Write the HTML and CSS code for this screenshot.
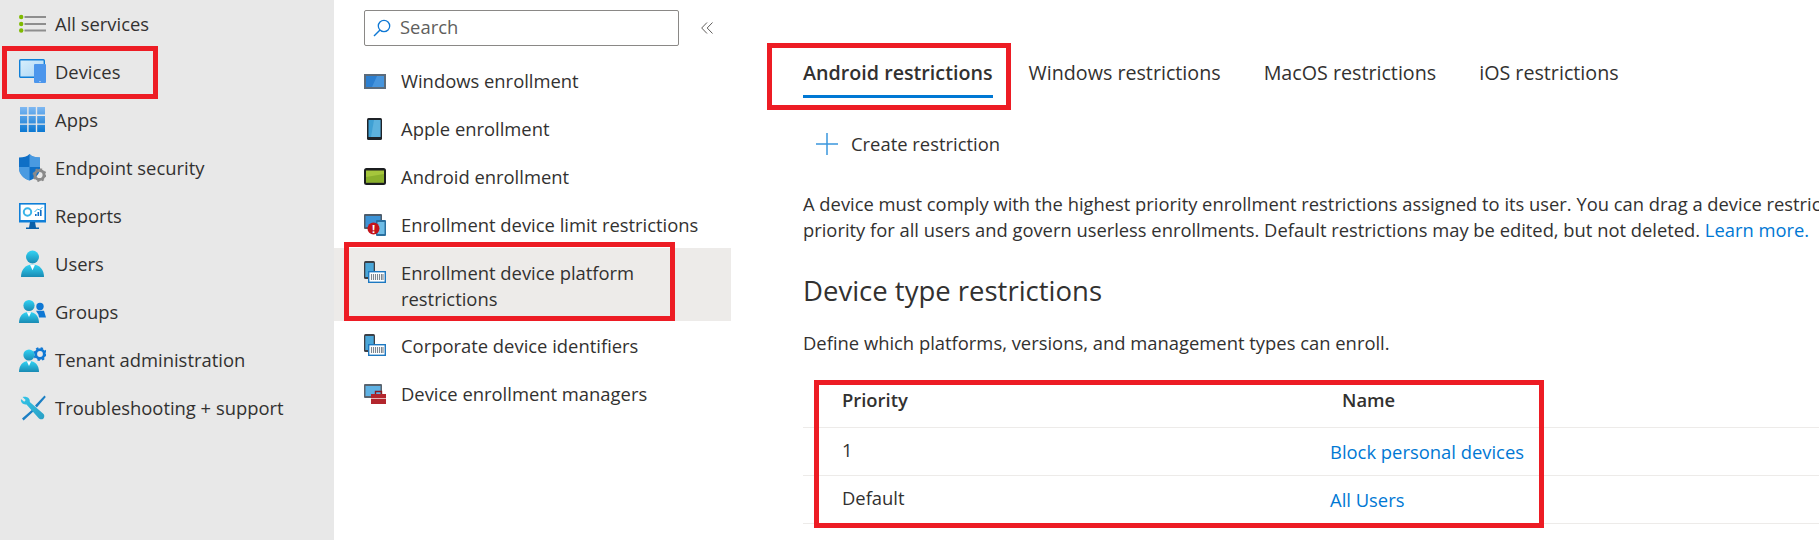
FILE: index.html
```html
<!DOCTYPE html>
<html lang="en">
<head>
  <meta charset="UTF-8">
  <title>Enrollment device platform restrictions</title>
  <link rel="stylesheet" href="styles.css">
</head>
<body>
  <svg class="defs" aria-hidden="true">
    <defs>
      <linearGradient id="gPerson" x1="0" y1="0" x2="0" y2="1"><stop offset="0" stop-color="#32d4f5"/><stop offset="1" stop-color="#198ab3"/></linearGradient>
      <linearGradient id="gApps" x1="0" y1="0" x2="0" y2="1"><stop offset="0" stop-color="#7fb8f2"/><stop offset="1" stop-color="#0a78d2"/></linearGradient>
      <linearGradient id="gScreen" x1="0" y1="0" x2="1" y2="1"><stop offset="0" stop-color="#d9effc"/><stop offset="1" stop-color="#a9d5f5"/></linearGradient>
      <linearGradient id="gWrench" x1="0" y1="0" x2="1" y2="1"><stop offset="0" stop-color="#32c5e8"/><stop offset="1" stop-color="#2a9fc4"/></linearGradient>
      <symbol id="phoneBarcode" viewBox="0 0 22 24">
        <rect x="0" y="1" width="11" height="18" rx="1.5" fill="#3b3f46"/>
        <rect x="1.3" y="3" width="8.4" height="14" fill="#4aa6d8"/>
        <rect x="4.7" y="11.700" width="16.600" height="10.600" fill="#fff" stroke="#1d78c1" stroke-width="1.400"/>
        <path d="M7.500 14v6M9.500 14v6M11.500 14v6M13.500 14v6M15.500 14v6M17.500 14v6M19 14v6" stroke="#7d8790" stroke-width="1.100"/>
      </symbol>
    </defs>
  </svg>

  <div class="page">
    <nav class="sidebar">
      <a class="side-item">
        <svg class="side-icon" viewBox="0 0 27 28">
          <circle cx="2.2" cy="7" r="2.2" fill="#7fba00"/><circle cx="2.2" cy="14" r="2.2" fill="#7fba00"/><circle cx="2.2" cy="20.5" r="2.2" fill="#7fba00"/>
          <path d="M5.5 7H27M5.5 14H27M5.5 20.5H27" stroke="#8e8e8e" stroke-width="2"/>
        </svg>
        <span>All services</span>
      </a>
      <a class="side-item">
        <svg class="side-icon" viewBox="0 0 27 28">
          <rect x="0.7" y="1.7" width="24.6" height="17.6" rx="1" fill="url(#gScreen)" stroke="#0f7fd8" stroke-width="1.4"/>
          <rect x="15" y="6" width="12" height="19" rx="1" fill="#4c96ec"/>
          <circle cx="21" cy="23.6" r="0.6" fill="#fff"/>
        </svg>
        <span>Devices</span>
      </a>
      <a class="side-item">
        <svg class="side-icon" viewBox="0 0 27 28">
          <path fill="url(#gApps)" d="M1 1h7.2v7.5H1zM9.6 1h7.2v7.5H9.6zM18.2 1h7.8v7.5h-7.8zM1 9.9h7.2v7.5H1zM9.6 9.9h7.2v7.5H9.6zM18.2 9.9h7.8v7.5h-7.8zM1 18.8h7.2V26H1zM9.6 18.8h7.2V26H9.6zM18.2 18.8h7.8V26h-7.8z"/>
        </svg>
        <span>Apps</span>
      </a>
      <a class="side-item">
        <svg class="side-icon" viewBox="0 0 27 28">
          <path fill="#0f6fc6" d="M10.5 0C8 2.6 4.5 3.4 0 3.6v10.6C0 20.5 5 24.4 10.5 26.5 16 24.4 21 20.5 21 14.2V3.6C16.5 3.4 13 2.6 10.5 0z"/>
          <path fill="#5ea8ea" d="M10.5 0v13H0v1.2C0 20.5 5 24.4 10.5 26.5zM10.5 13H21V3.6C16.5 3.4 13 2.6 10.5 0z" opacity=".75"/>
          <circle cx="20.5" cy="21" r="4.6" fill="none" stroke="#8a8a8a" stroke-width="3"/>
          <circle cx="20.5" cy="21" r="6" fill="none" stroke="#8a8a8a" stroke-width="1.8" stroke-dasharray="2 2.7"/>
        </svg>
        <span>Endpoint security</span>
      </a>
      <a class="side-item">
        <svg class="side-icon" viewBox="0 0 27 28">
          <rect x="0.8" y="1.8" width="25.4" height="17" fill="#fff" stroke="#0f7fd8" stroke-width="1.6"/>
          <path d="M0 18h27v2.5H0z" fill="#0f7fd8"/>
          <path d="M11 20h5l1 5.5h3V27H7v-1.500h3z" fill="#0a5fa8"/>
          <circle cx="8.500" cy="10" r="3.700" fill="none" stroke="#3ab4e8" stroke-width="2"/>
          <path d="M16 14v-2h1.600v2zM18.500 14v-4h1.600v4zM21 14V8h1.600v6z" fill="#0f6fc6"/>
          <path d="M15.500 10l3-3 2 1 3-3" fill="none" stroke="#3ab4e8" stroke-width="1"/>
        </svg>
        <span>Reports</span>
      </a>
      <a class="side-item">
        <svg class="side-icon" viewBox="0 0 27 28">
          <circle cx="13.500" cy="7" r="6.500" fill="url(#gPerson)"/>
          <path d="M2 27c0-7 4-12.500 11.500-12.500S25 20 25 27z" fill="url(#gPerson)"/>
          <path d="M11 14.800h5l-2.500 5.500z" fill="#fff"/>
        </svg>
        <span>Users</span>
      </a>
      <a class="side-item">
        <svg class="side-icon" viewBox="0 0 27 28">
          <circle cx="10" cy="7.500" r="5.600" fill="url(#gPerson)"/>
          <path d="M0 25c0-6.500 3.500-11 10-11s10 4.500 10 11z" fill="url(#gPerson)"/>
          <path d="M7.800 14.200h4.400l-2.200 4.800z" fill="#fff"/>
          <circle cx="21" cy="8.500" r="3.700" fill="#0f78d4"/>
          <path d="M17 12.800h8l2 6.700h-7l-.600-3z" fill="#0f78d4"/>
        </svg>
        <span>Groups</span>
      </a>
      <a class="side-item">
        <svg class="side-icon" viewBox="0 0 27 28">
          <circle cx="21" cy="8" r="4.300" fill="none" stroke="#0f78d4" stroke-width="2.800"/>
          <circle cx="21" cy="8" r="6" fill="none" stroke="#0f78d4" stroke-width="1.800" stroke-dasharray="2.400 2.300"/>
          <circle cx="10" cy="9" r="5.600" fill="url(#gPerson)"/>
          <path d="M0 26c0-6.500 3.500-11 10-11s10 4.500 10 11z" fill="url(#gPerson)"/>
          <path d="M7.800 15.200h4.400l-2.200 4.800z" fill="#fff"/>
        </svg>
        <span>Tenant administration</span>
      </a>
      <a class="side-item">
        <svg class="side-icon" viewBox="0 0 27 28">
          <path d="M25.500 1.500l-9.500 10 1.800 2 9-10.500z M14.500 14.500L3 24.600l1.600 1.800 11.400-10.300z" fill="#1c7fc4"/>
          <path d="M3.500 3l3.200 3-1.500 1.800-3.200-2.800C1.300 8 3.800 11 7.500 10.400L19.500 24c1.200 1.600 3.600 1.800 5 .4 1.200-1.400 1.100-3.500-.5-4.800L10.800 8c.6-3.800-3-6.300-7.300-5z" fill="url(#gWrench)"/>
        </svg>
        <span>Troubleshooting + support</span>
      </a>
    </nav>

    <aside class="menu">
      <div class="menu-top">
        <div class="search">
          <svg class="search-icon" viewBox="0 0 18 18">
            <circle cx="11" cy="7" r="5.700" fill="none" stroke="#0f78d4" stroke-width="1.300"/>
            <path d="M7 11l-6 6" stroke="#0f78d4" stroke-width="1.500"/>
          </svg>
          <span class="search-text">Search</span>
        </div>
        <svg class="collapse" viewBox="0 0 12 12">
          <path d="M6 .5L.7 6 6 11.500M11.500 .5L6.200 6l5.300 5.500" fill="none" stroke="#605e5c" stroke-width="1"/>
        </svg>
      </div>
      <ul class="menu-list">
        <li class="menu-item">
          <svg class="menu-icon" viewBox="0 0 22 24">
            <rect x="0" y="6" width="22" height="15" fill="#5b6b7b"/>
            <rect x="2" y="8" width="18" height="11" fill="#2c7fd0"/>
            <path d="M13 8h7v11h-12z" fill="#5aa4e6" opacity=".6"/>
          </svg>
          <span>Windows enrollment</span>
        </li>
        <li class="menu-item">
          <svg class="menu-icon" viewBox="0 0 22 24">
            <rect x="3" y="2" width="15" height="22" rx="1.500" fill="#1f2328"/>
            <rect x="4.500" y="4" width="12" height="17" fill="#3fa0d4"/>
            <path d="M10 4h6.500v17H7z" fill="#7cc4e8" opacity=".5"/>
          </svg>
          <span>Apple enrollment</span>
        </li>
        <li class="menu-item">
          <svg class="menu-icon" viewBox="0 0 22 24">
            <rect x="0" y="4" width="22" height="17" rx="2.500" fill="#1b1d1f"/>
            <rect x="2" y="6.500" width="18" height="12" fill="#a5c63c"/>
            <path d="M2 13l18-3v8.500H2z" fill="#8ab02c"/>
          </svg>
          <span>Android enrollment</span>
        </li>
        <li class="menu-item">
          <svg class="menu-icon" viewBox="0 0 22 24">
            <rect x="0" y="2" width="18" height="15" rx="1" fill="#4d5c6b"/>
            <rect x="1.500" y="4" width="15" height="11" fill="#3c93d6"/>
            <rect x="12" y="8" width="10" height="16" rx="1" fill="#2a6f9e"/>
            <rect x="13.500" y="10" width="7" height="12" fill="#6fbde6"/>
            <circle cx="9.500" cy="16.500" r="6" fill="#c4141c"/>
            <text class="alert" x="9.500" y="20.500">!</text>
          </svg>
          <span>Enrollment device limit restrictions</span>
        </li>
        <li class="menu-item menu-item-active">
          <svg class="menu-icon" viewBox="0 0 22 24"><use href="#phoneBarcode"/></svg>
          <span>Enrollment device platform restrictions</span>
        </li>
        <li class="menu-item">
          <svg class="menu-icon" viewBox="0 0 22 24"><use href="#phoneBarcode"/></svg>
          <span>Corporate device identifiers</span>
        </li>
        <li class="menu-item">
          <svg class="menu-icon" viewBox="0 0 22 24">
            <rect x="0" y="3" width="18" height="14" rx="1" fill="#59636e"/>
            <rect x="1.500" y="5" width="15" height="10" fill="#5fb2e4"/>
            <rect x="7" y="13" width="15" height="10" fill="#b3262d"/>
            <path d="M11.500 13v-2.500h6V13" fill="none" stroke="#8a1b20" stroke-width="1.400"/>
            <path d="M7 17.500h15" stroke="#e7b6b8" stroke-width="1"/>
          </svg>
          <span>Device enrollment managers</span>
        </li>
      </ul>
    </aside>

    <main class="content">
      <div class="tabs">
        <a class="tab tab-active">Android restrictions</a>
        <a class="tab">Windows restrictions</a>
        <a class="tab">MacOS restrictions</a>
        <a class="tab">iOS restrictions</a>
      </div>

      <div class="toolbar">
        <svg class="plus" viewBox="0 0 22 22"><path d="M11 0v22M0 11h22" stroke="#3a96dd" stroke-width="1.500"/></svg>
        <span>Create restriction</span>
      </div>

      <p class="intro">A device must comply with the highest priority enrollment restrictions assigned to its user. You can drag a device restriction to change its priority. Default restrictions are the lowest<br>priority for all users and govern userless enrollments. Default restrictions may be edited, but not deleted. <a class="link">Learn more.</a></p>

      <h2>Device type restrictions</h2>
      <p class="sub">Define which platforms, versions, and management types can enroll.</p>

      <div class="table">
        <div class="row row-head">
          <div class="cell-priority">Priority</div>
          <div class="cell-name">Name</div>
        </div>
        <div class="row">
          <div class="cell-priority">1</div>
          <div class="cell-link"><a class="link">Block personal devices</a></div>
        </div>
        <div class="row">
          <div class="cell-priority">Default</div>
          <div class="cell-link"><a class="link">All Users</a></div>
        </div>
      </div>
    </main>

    <!-- red callouts drawn over the screenshot -->
    <div class="mark mark-devices"></div>
    <div class="mark mark-platform"></div>
    <div class="mark mark-tab"></div>
    <div class="mark mark-table"></div>
  </div>
</body>
</html>
```

FILE: styles.css
```css
:root {
  --text-color: #323130;
  --link-color: #0078d4;
  --line-color: #edebe9;
  --mark-color: #ed1c24;
}

* {
  margin: 0;
  padding: 0;
  box-sizing: border-box;
}

html, body {
  height: 100%;
  overflow: hidden;
}

body {
  background: #fff;
  color: var(--text-color);
  font-family: "Open Sans", "Noto Sans", sans-serif;
  font-size: 18.4px;
  line-height: 26px;
}

.defs {
  position: absolute;
  width: 0;
  height: 0;
}

.page {
  position: relative;
  display: flex;
  width: 1819px;
  height: 540px;
  overflow: hidden;
}

/* left nav */
.sidebar {
  width: 334px;
  flex-shrink: 0;
  background: #e8e8e8;
}
.side-item {
  display: flex;
  align-items: center;
  gap: 9px;
  height: 48px;
  padding-left: 19px;
}
.side-icon {
  width: 27px;
  height: 28px;
  flex-shrink: 0;
}

/* blade menu */
.menu {
  width: 397px;
  flex-shrink: 0;
}
.menu-top {
  display: flex;
  align-items: center;
  gap: 22px;
  height: 56px;
  padding: 10px 0 10px 30px;
}
.search {
  display: flex;
  align-items: center;
  gap: 9px;
  width: 315px;
  height: 36px;
  padding-left: 8px;
  border: 1px solid #8a8886;
  border-radius: 2px;
  color: #605e5c;
}
.search-text {
  padding-bottom: 2px;
}
.search-icon {
  width: 18px;
  height: 18px;
}
.collapse {
  width: 12px;
  height: 12px;
}
.menu-list {
  list-style: none;
}
.menu-item {
  display: flex;
  align-items: flex-start;
  gap: 15px;
  padding: 12px 20px 10px 30px;
}
.menu-item-active {
  background: var(--line-color);
  padding-top: 12px;
  padding-bottom: 9px;
}
.menu-icon {
  width: 22px;
  height: 24px;
  flex-shrink: 0;
}
.alert {
  fill: #fff;
  font-size: 11px;
  font-weight: 700;
  text-anchor: middle;
}

/* main content */
.content {
  flex: 1;
  min-width: 0;
  padding-left: 72px;
}
.tabs {
  display: flex;
  gap: 43px;
  padding-top: 47px;
}
.tab {
  padding: 13px 0 9px;
  border-bottom: 3px solid transparent;
  font-size: 19.7px;
}
.tab-active {
  margin-right: -7px;
  font-weight: 600;
  border-bottom-color: var(--link-color);
}
.toolbar {
  display: flex;
  align-items: center;
  gap: 13px;
  height: 26px;
  margin-top: 33px;
  padding-left: 13px;
}
.plus {
  width: 22px;
  height: 22px;
}
.intro {
  margin-top: 34px;
  font-size: 18.35px;
  white-space: nowrap;
}
.link {
  color: var(--link-color);
}
h2 {
  margin-top: 30px;
  font-size: 27.500px;
  font-weight: 400;
  line-height: 36px;
}
.sub {
  margin-top: 21px;
}

.table {
  margin-top: 28px;
}
.row {
  display: flex;
  height: 48px;
  padding-top: 9px;
  border-bottom: 1px solid var(--line-color);
}
.row-head {
  height: 44px;
  padding-top: 3px;
  font-weight: 600;
}
.cell-priority {
  width: 527px;
  padding-left: 39px;
}
.cell-name {
  padding-left: 12px;
}
.cell-link {
  padding-top: 2px;
}

/* callouts */
.mark {
  position: absolute;
  border: 5px solid var(--mark-color);
}
.mark-devices {
  left: 2px;
  top: 46px;
  width: 156px;
  height: 53px;
}
.mark-platform {
  left: 344px;
  top: 242px;
  width: 331px;
  height: 79px;
}
.mark-tab {
  left: 767px;
  top: 43px;
  width: 244px;
  height: 67px;
}
.mark-table {
  left: 814px;
  top: 380px;
  width: 730px;
  height: 148px;
}
```
